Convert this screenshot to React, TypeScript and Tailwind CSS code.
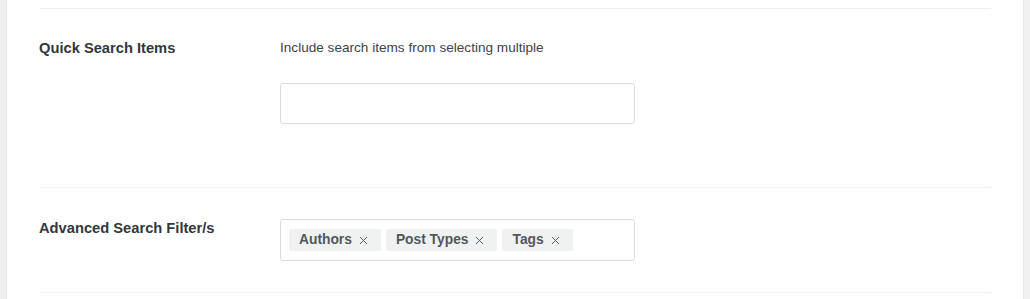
import { X } from "lucide-react";

const Chip = ({ label }: { label: string }) => (
    <span className="inline-flex h-[22px] items-center gap-[5px] rounded-[3px] bg-[#f0f2f2] pl-[10px] pr-[11px] text-[13.8px] font-bold text-[#50575e]">
        { label }
        <X className="h-[13px] w-[13px]" strokeWidth={ 1.8 } />
    </span>
);

const App = () => {
    return (
        <div className="flex h-[299px] w-full bg-[#f0f0f1] font-['Liberation_Sans',Arial,sans-serif]">
            <div className="w-[7px] shrink-0 border-r border-[#e8e8e8]" />
            <main className="flex-1 bg-white px-[32px] pt-[8px]">
                {/* quick search row */}
                <div className="flex h-[179px] border-t border-[#f0f0f1] pt-[29px]">
                    <div className="w-[241px] shrink-0 text-[14.7px] font-bold leading-5 text-[#32373c]">
                        Quick Search Items
                    </div>
                    <div className="flex flex-col">
                        <p className="text-[13.6px] leading-5 text-[#3c434a]">
                            Include search items from selecting multiple
                        </p>
                        <div className="mt-[25px] h-[41px] w-[355px] rounded-[3px] border border-[#dcdcde] bg-white" />
                    </div>
                </div>

                {/* advanced filters row */}
                <div className="flex h-[106px] border-t border-b border-[#f0f0f1] pt-[31px]">
                    <div className="w-[241px] shrink-0 -mt-[1px] text-[14.7px] font-bold leading-5 text-[#32373c]">
                        Advanced Search Filter/s
                    </div>
                    <div className="flex h-[42px] w-[355px] items-center gap-[5px] rounded-[3px] border border-[#dcdcde] bg-white px-[8px]">
                        <Chip label="Authors" />
                        <Chip label="Post Types" />
                        <Chip label="Tags" />
                    </div>
                </div>
            </main>
            <div className="w-[7px] shrink-0 border-l border-[#e8e8e8]" />
        </div>
    );
};

export default App;
